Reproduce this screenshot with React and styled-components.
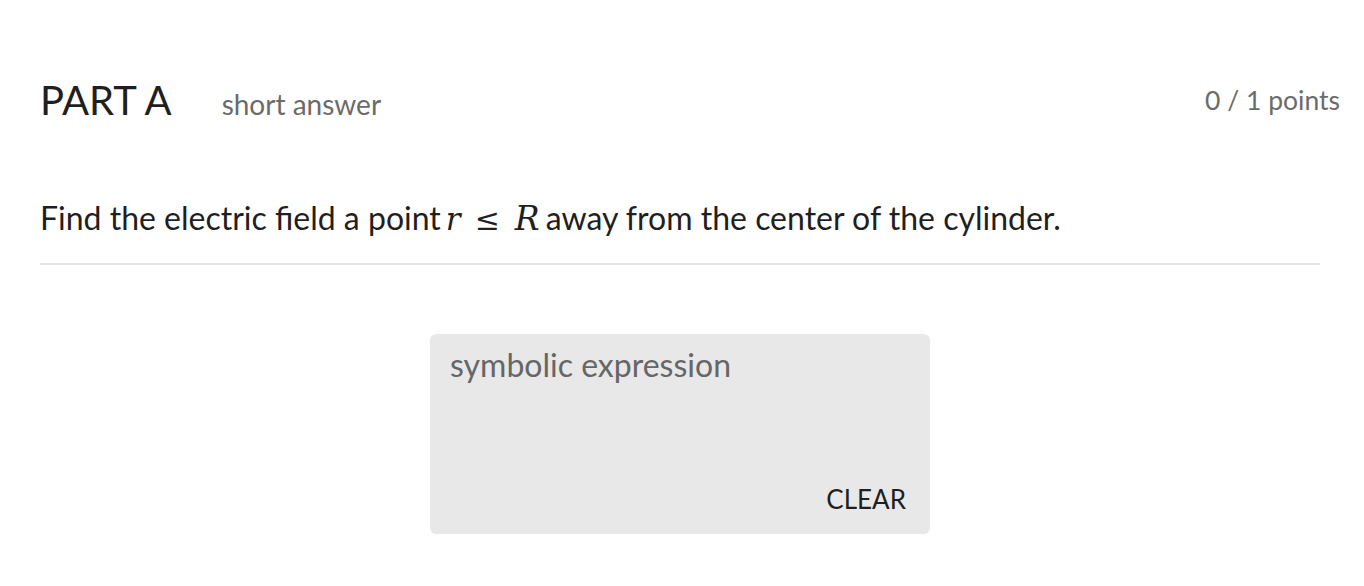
import React from 'react'
import styled, { createGlobalStyle } from 'styled-components'

const GlobalStyle = createGlobalStyle`
  body {
    margin: 0;
    background: #fff;
    font-family: Lato, "Noto Sans", sans-serif;
    color: #222;
  }
`

const Page = styled.main`
  padding: 76px 24px 0 40px;
`

const Header = styled.header`
  display: flex;
  align-items: baseline;
`

const PartTitle = styled.h2`
  margin: 0;
  font-size: 40px;
  font-weight: 400;
  line-height: 48px;
  color: #1f1f1f;
`

const Kind = styled.span`
  margin-left: 50px;
  font-size: 28px;
  color: #6b6b6b;
`

const Points = styled.span`
  margin-left: auto;
  font-size: 26.5px;
  color: #6b6b6b;
  position: relative;
  top: -5px;
`

const Question = styled.section`
  margin-right: 20px;
  margin-top: 75px;
  padding-bottom: 25px;
  border-bottom: 2px solid #e3e3e3;
`

const Prompt = styled.p`
  margin: 0;
  font-size: 32px;
  line-height: 37px;
  color: #1f1f1f;
`

const MathVar = styled.i`
  font-family: "DejaVu Serif", serif;
  font-size: ${p => (p.$big ? 33 : 31)}px;
  font-weight: 400;
  margin: 0 ${p => p.$after}px 0 ${p => p.$before}px;
`

const MathOp = styled.span`
  font-family: "DejaVu Serif", serif;
  font-size: 30px;
  margin: 0 13px;
`

const AnswerWrap = styled.div`
  display: flex;
  justify-content: center;
  margin-right: 20px;
  padding-top: 69px;
`

const AnswerBox = styled.div`
  width: 500px;
  height: 200px;
  box-sizing: border-box;
  background: #e8e8e8;
  border-radius: 6px;
  padding: 11px 24px 19px 20px;
  display: flex;
  flex-direction: column;
  justify-content: space-between;
`

const Placeholder = styled.div`
  font-size: 32px;
  color: #666;
`

const ClearButton = styled.button`
  align-self: flex-end;
  border: 0;
  background: none;
  padding: 0;
  font-family: Lato, sans-serif;
  font-size: 26px;
  color: #1f1f1f;
  cursor: pointer;
`

export default function App() {
  return (
    <>
      <GlobalStyle />
      <Page>
        <Header>
          <PartTitle>PART A</PartTitle>
          <Kind>short answer</Kind>
          <Points>0 / 1 points</Points>
        </Header>
        <Question>
          <Prompt>
            Find the electric field a point<MathVar $before={5} $after={1}>r</MathVar><MathOp>≤</MathOp><MathVar $big $before={2} $after={6}>R</MathVar>away from the center of the cylinder.
          </Prompt>
        </Question>
        <AnswerWrap>
          <AnswerBox>
            <Placeholder>symbolic expression</Placeholder>
            <ClearButton>CLEAR</ClearButton>
          </AnswerBox>
        </AnswerWrap>
      </Page>
    </>
  )
}
